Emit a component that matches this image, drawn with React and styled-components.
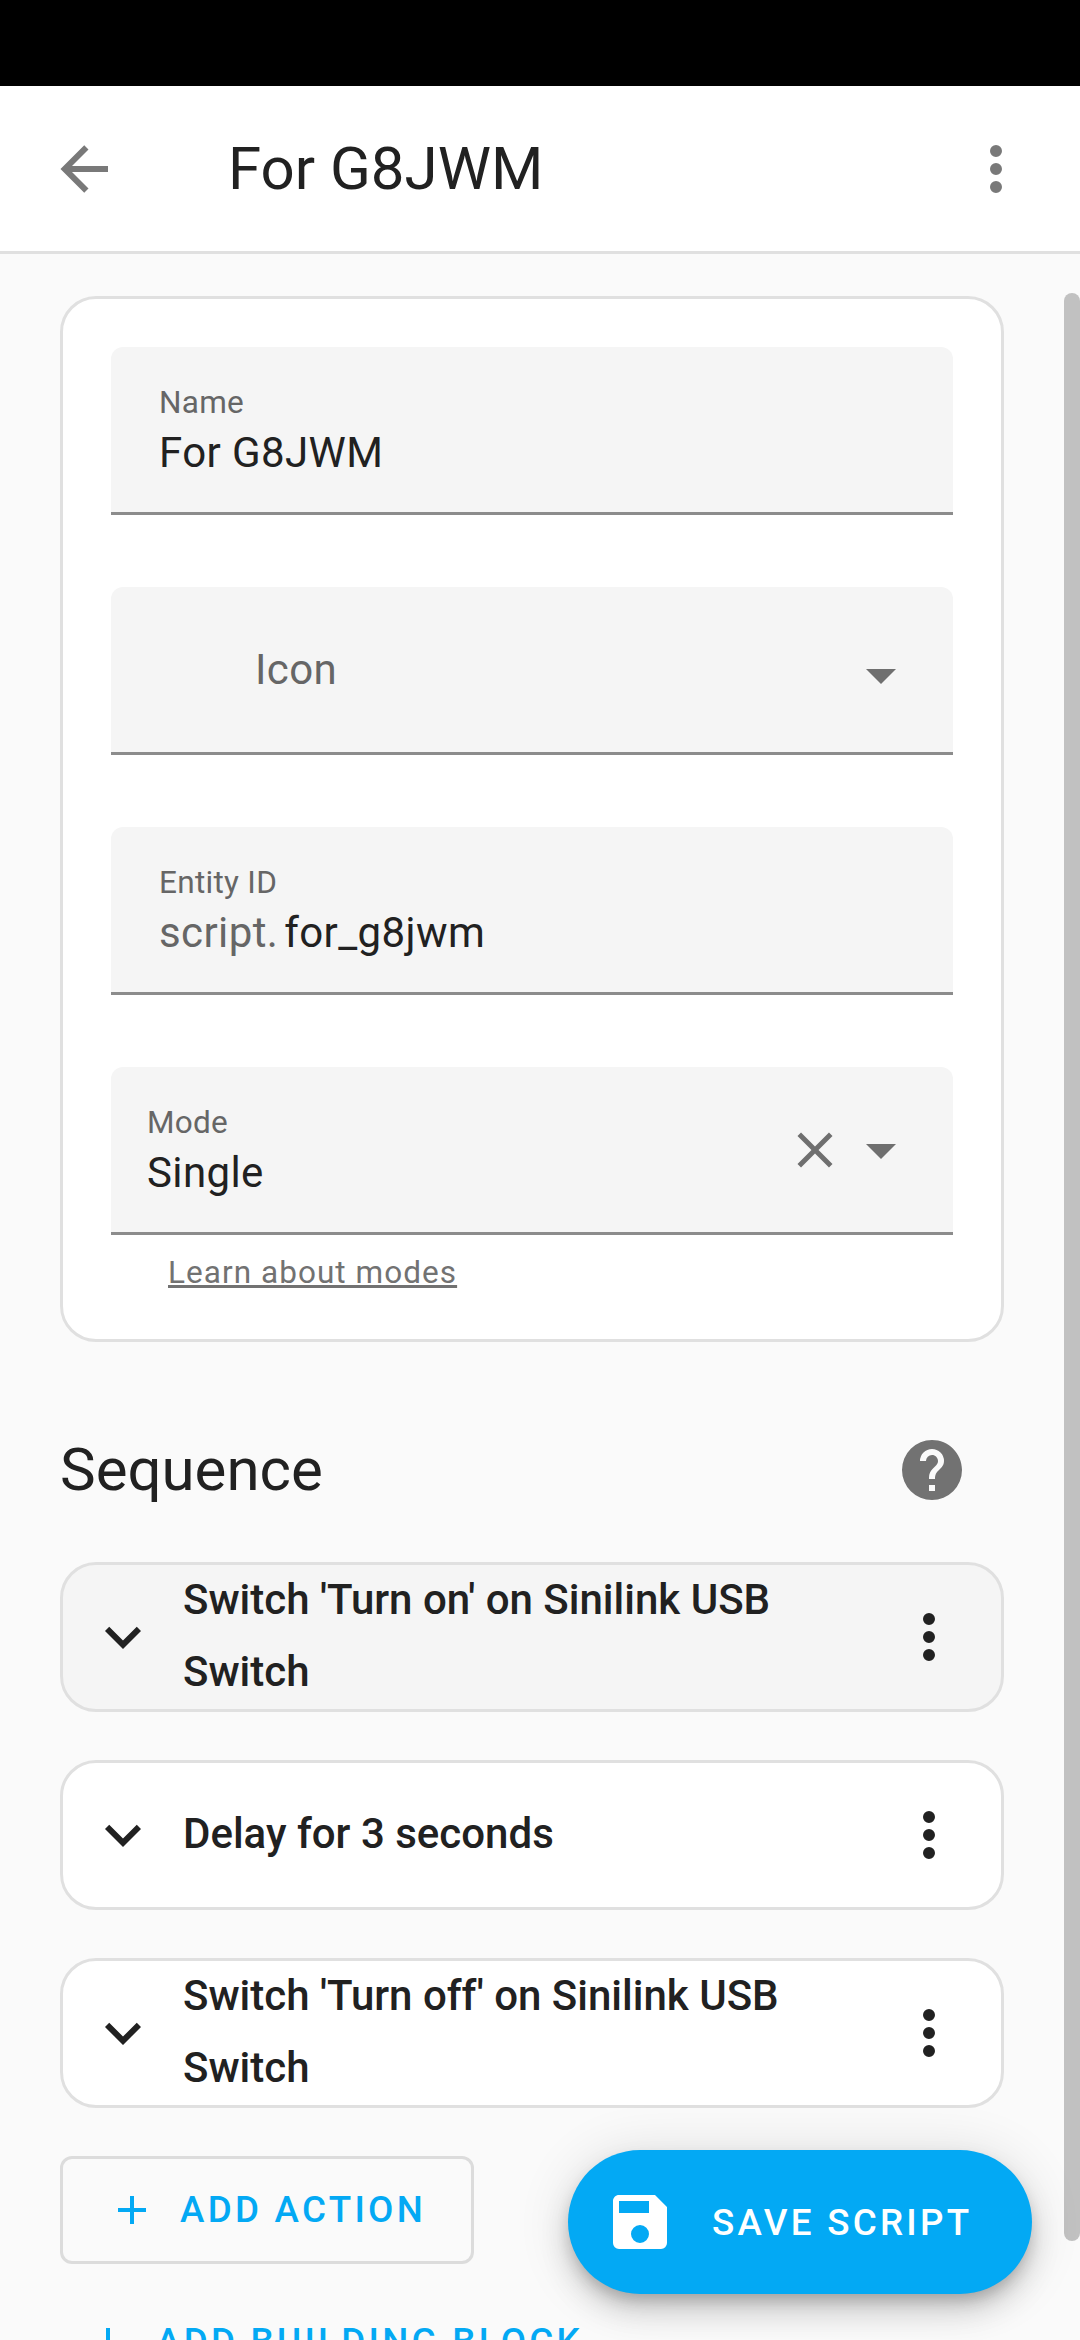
import styled, { createGlobalStyle } from "styled-components";

const icons = {
  back: "M20,11V13H8L13.5,18.5L12.08,19.92L4.16,12L12.08,4.08L13.5,5.5L8,11H20Z",
  dots: "M12,16A2,2 0 0,1 14,18A2,2 0 0,1 12,20A2,2 0 0,1 10,18A2,2 0 0,1 12,16M12,10A2,2 0 0,1 14,12A2,2 0 0,1 12,14A2,2 0 0,1 10,12A2,2 0 0,1 12,10M12,4A2,2 0 0,1 14,6A2,2 0 0,1 12,8A2,2 0 0,1 10,6A2,2 0 0,1 12,4Z",
  menuDown: "M7,10L12,15L17,10H7Z",
  close:
    "M19,6.41L17.59,5L12,10.59L6.41,5L5,6.41L10.59,12L5,17.59L6.41,19L12,13.41L17.59,19L19,17.59L13.41,12L19,6.41Z",
  help: "M15.07,11.25L14.17,12.17C13.45,12.89 13,13.5 13,15H11V14.5C11,13.39 11.45,12.39 12.17,11.67L13.41,10.41C13.78,10.05 14,9.55 14,9C14,7.89 13.1,7 12,7A2,2 0 0,0 10,9H8A4,4 0 0,1 12,5A4,4 0 0,1 16,9C16,9.88 15.64,10.67 15.07,11.25M13,19H11V17H13M12,2A10,10 0 0,0 2,12A10,10 0 0,0 12,22A10,10 0 0,0 22,12C22,6.47 17.5,2 12,2Z",
  chevronDown: "M7.41,8.58L12,13.17L16.59,8.58L18,10L12,16L6,10L7.41,8.58Z",
  plus: "M19,13H13V19H11V13H5V11H11V5H13V11H19V13Z",
  save: "M15,9H5V5H15M12,19A3,3 0 0,1 9,16A3,3 0 0,1 12,13A3,3 0 0,1 15,16A3,3 0 0,1 12,19M17,3H5C3.89,3 3,3.9 3,5V19A2,2 0 0,0 5,21H19A2,2 0 0,0 21,19V7L17,3Z",
};

const steps = [
  { title: "Switch 'Turn on' on Sinilink USB Switch", focused: true },
  { title: "Delay for 3 seconds" },
  { title: "Switch 'Turn off' on Sinilink USB Switch" },
];

const Icon = ({ name, size = 72 }) => (
  <Svg viewBox="0 0 24 24" $size={size}>
    <path d={icons[name]} />
  </Svg>
);

export default function App() {
  return (
    <Screen>
      <GlobalStyle />
      <StatusBar />
      <Header>
        <IconButton>
          <Icon name="back" />
        </IconButton>
        <Title>For G8JWM</Title>
        <IconButton>
          <Icon name="dots" />
        </IconButton>
      </Header>

      <Content>
        <Card>
          <Field>
            <FieldText>
              <Label>Name</Label>
              <Value>For G8JWM</Value>
            </FieldText>
          </Field>
          <Field>
            <Placeholder>Icon</Placeholder>
            <FieldIcons $low>
              <Icon name="menuDown" />
            </FieldIcons>
          </Field>
          <Field>
            <FieldText>
              <Label>Entity ID</Label>
              <Value>
                <Prefix>script.</Prefix>for_g8jwm
              </Value>
            </FieldText>
          </Field>
          <Field $inset={36}>
            <FieldText>
              <Label>Mode</Label>
              <Value>Single</Value>
            </FieldText>
            <FieldIcons>
              <Icon name="close" size={60} />
              <Icon name="menuDown" />
            </FieldIcons>
          </Field>
          <HelperLink>Learn about modes</HelperLink>
        </Card>

        <SectionHeader>
          <SectionTitle>Sequence</SectionTitle>
          <HelpButton>
            <Icon name="help" />
          </HelpButton>
        </SectionHeader>

        <Steps>
          {steps.map((step) => (
            <Step key={step.title} $focused={step.focused}>
              <Icon name="chevronDown" />
              <StepTitle>{step.title}</StepTitle>
              <Icon name="dots" />
            </Step>
          ))}
        </Steps>

        <Actions>
          <ActionButton $outlined>
            <Icon name="plus" size={48} />
            <ActionLabel>ADD ACTION</ActionLabel>
          </ActionButton>
          <ActionButton>
            <Icon name="plus" size={48} />
            <ActionLabel>ADD BUILDING BLOCK</ActionLabel>
          </ActionButton>
        </Actions>
      </Content>

      <Scrollbar />
      <Fab>
        <Icon name="save" />
        SAVE SCRIPT
      </Fab>
    </Screen>
  );
}

const GlobalStyle = createGlobalStyle`
  * {
    box-sizing: border-box;
  }

  body {
    margin: 0;
    background: #fafafa;
  }

  button {
    margin: 0;
    padding: 0;
    border: none;
    background: none;
    font-family: inherit;
    color: inherit;
  }
`;

const Svg = styled.svg`
  display: block;
  flex: none;
  width: ${(props) => props.$size}px;
  height: ${(props) => props.$size}px;
  fill: currentColor;
`;

const Screen = styled.div`
  position: relative;
  width: 1080px;
  height: 2340px;
  overflow: hidden;
  background: #fafafa;
  color: #212121;
  font-family: Roboto, sans-serif;
`;

const StatusBar = styled.div`
  height: 86px;
  background: #000;
`;

const Header = styled.header`
  display: flex;
  align-items: center;
  height: 168px;
  padding: 0 12px;
  background: #fff;
  border-bottom: 3px solid #e0e0e0;
`;

const IconButton = styled.button`
  display: flex;
  align-items: center;
  justify-content: center;
  width: 144px;
  height: 144px;
  color: #797979;
`;

const Title = styled.h1`
  flex: 1;
  margin: 0 0 0 72px;
  font-size: 60px;
  font-weight: 400;
  line-height: 60px;
`;

const Content = styled.main`
  padding: 42px 76px 0 60px;
`;

const Card = styled.section`
  display: flex;
  flex-direction: column;
  gap: 72px;
  height: 1046px;
  padding: 48px;
  background: #fff;
  border: 3px solid #e0e0e0;
  border-radius: 36px;
`;

const Field = styled.div`
  display: flex;
  flex: none;
  justify-content: space-between;
  height: 168px;
  padding: 0 36px 0 ${(props) => props.$inset || 48}px;
  background: #f5f5f5;
  border-bottom: 3px solid #8c8c8c;
  border-radius: 12px 12px 0 0;
`;

const FieldText = styled.div`
  padding-top: 38px;
`;

const Label = styled.div`
  font-size: 31.5px;
  line-height: 36px;
  letter-spacing: 0.009375em;
  color: #666;
`;

const Value = styled.div`
  margin-top: 2px;
  font-size: 42px;
  line-height: 60px;
  letter-spacing: 0.009375em;
`;

const Prefix = styled.span`
  margin-right: 6px;
  color: #666;
`;

const Placeholder = styled.div`
  padding-left: 96px;
  font-size: 42px;
  line-height: 165px;
  letter-spacing: 0.009375em;
  color: #666;
`;

const FieldIcons = styled.div`
  display: flex;
  align-items: center;
  height: 72px;
  margin-top: ${(props) => (props.$low ? 52 : 47)}px;
  color: #6f6f6f;
`;

const HelperLink = styled.a`
  align-self: flex-start;
  margin: -54px 0 0 57px;
  font-size: 31.5px;
  line-height: 40px;
  letter-spacing: 0.0333em;
  color: #727272;
  text-decoration: underline;
  text-decoration-thickness: 3px;
`;

const SectionHeader = styled.div`
  display: flex;
  align-items: center;
  justify-content: space-between;
  margin: 56px 0 20px;
`;

const SectionTitle = styled.h2`
  margin: 0;
  font-size: 60px;
  font-weight: 400;
  line-height: 60px;
`;

const HelpButton = styled(IconButton)`
  color: #727272;
`;

const Steps = styled.div`
  display: flex;
  flex-direction: column;
  gap: 48px;
`;

const Step = styled.div`
  display: flex;
  align-items: center;
  height: 150px;
  padding: 0 36px 0 24px;
  background: ${(props) => (props.$focused ? "#f5f5f5" : "#fff")};
  border: 3px solid #e0e0e0;
  border-radius: 36px;
`;

const StepTitle = styled.h3`
  flex: 1;
  margin: -2px 36px 0 24px;
  font-size: 42px;
  font-weight: 500;
  line-height: 72px;
`;

const Actions = styled.div`
  display: flex;
  flex-direction: column;
  align-items: flex-start;
  gap: 24px;
  margin-top: 48px;
`;

const ActionButton = styled.button`
  display: flex;
  align-items: center;
  gap: 24px;
  height: 108px;
  padding: 0 ${(props) => (props.$outlined ? 45 : 24)}px;
  border: ${(props) => (props.$outlined ? "3px solid #dcdcdc" : "none")};
  border-radius: 12px;
  font-size: 36.75px;
  font-weight: 500;
  letter-spacing: 0.0892857em;
  white-space: nowrap;
  color: #03a9f4;
`;

const ActionLabel = styled.span`
  padding-bottom: 2px;
`;

const Scrollbar = styled.div`
  position: absolute;
  top: 293px;
  right: 0;
  width: 16px;
  height: 1948px;
  background: #c1c1c1;
  border-radius: 8px;
`;

const Fab = styled.button`
  position: absolute;
  right: 48px;
  bottom: 46px;
  display: flex;
  align-items: center;
  gap: 36px;
  width: 464px;
  height: 144px;
  padding-left: 36px;
  background: #03a9f4;
  border-radius: 72px;
  box-shadow:
    0 9px 15px -3px rgba(0, 0, 0, 0.2),
    0 18px 30px 0 rgba(0, 0, 0, 0.14),
    0 3px 54px 0 rgba(0, 0, 0, 0.12);
  color: #fff;
  font-size: 36.75px;
  font-weight: 500;
  letter-spacing: 0.0892857em;
  white-space: nowrap;
`;
